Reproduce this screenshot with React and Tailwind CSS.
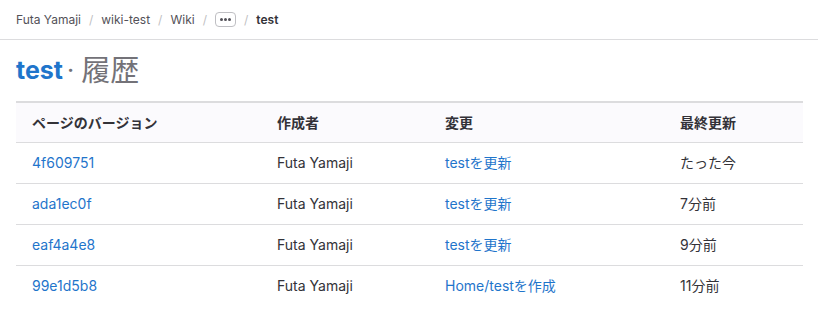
import React from "react";

const rows = [
  { sha: "4f609751", author: "Futa Yamaji", msg: "testを更新", time: "たった今" },
  { sha: "ada1ec0f", author: "Futa Yamaji", msg: "testを更新", time: "7分前" },
  { sha: "eaf4a4e8", author: "Futa Yamaji", msg: "testを更新", time: "9分前" },
  { sha: "99e1d5b8", author: "Futa Yamaji", msg: "Home/testを作成", time: "11分前" },
];

const font = { fontFamily: 'Inter, "Noto Sans CJK JP", sans-serif' };

export default function App() {
  return (
    <div className="min-h-screen bg-white text-[#333238]" style={font}>
      <nav className="h-[40px] border-b border-[#dcdcde] px-4 flex items-center text-[12px] text-[#535158]">
        <span>Futa Yamaji</span>
        <span className="mx-[8px] text-[#bfbfc3]">/</span>
        <span>wiki-test</span>
        <span className="mx-[8px] text-[#bfbfc3]">/</span>
        <span>Wiki</span>
        <span className="mx-[8px] text-[#bfbfc3]">/</span>
        <span className="h-[15px] w-[21px] rounded-[4px] border border-[#bfbfc3] flex items-center justify-center gap-[1.5px]">
          <span className="w-[2.5px] h-[2.5px] rounded-full bg-[#535158]" />
          <span className="w-[2.5px] h-[2.5px] rounded-full bg-[#535158]" />
          <span className="w-[2.5px] h-[2.5px] rounded-full bg-[#535158]" />
        </span>
        <span className="mx-[8px] text-[#bfbfc3]">/</span>
        <span className="font-semibold text-[#333238]">test</span>
      </nav>

      <div className="px-4">
        <h1 className="h-[61px] flex items-center leading-none">
          <span className="text-[25px] font-bold text-[#1f75cb]">test</span>
          <span className="text-[25px] text-[#737278] ml-[4px]">·</span>
          <span className="text-[29px] text-[#737278] ml-[7px]">履歴</span>
        </h1>

        <table className="w-[787px] border-t-2 border-[#dcdcde] text-[14px] border-collapse">
          <thead>
            <tr className="bg-[#fbfafd] border-b border-[#dcdcde] h-[40px] text-left">
              <th className="font-semibold pl-4 w-[261px]">ページのバージョン</th>
              <th className="font-semibold w-[168px]">作成者</th>
              <th className="font-semibold w-[235px]">変更</th>
              <th className="font-semibold">最終更新</th>
            </tr>
          </thead>
          <tbody>
            {rows.map((r, i) => (
              <tr
                key={r.sha}
                className={`h-[41px] ${i < rows.length - 1 ? "border-b border-[#dcdcde]" : ""}`}
              >
                <td className="pl-4 text-[#1f75cb]">{r.sha}</td>
                <td>{r.author}</td>
                <td className="text-[#1f75cb]">{r.msg}</td>
                <td>{r.time}</td>
              </tr>
            ))}
          </tbody>
        </table>
      </div>
    </div>
  );
}
